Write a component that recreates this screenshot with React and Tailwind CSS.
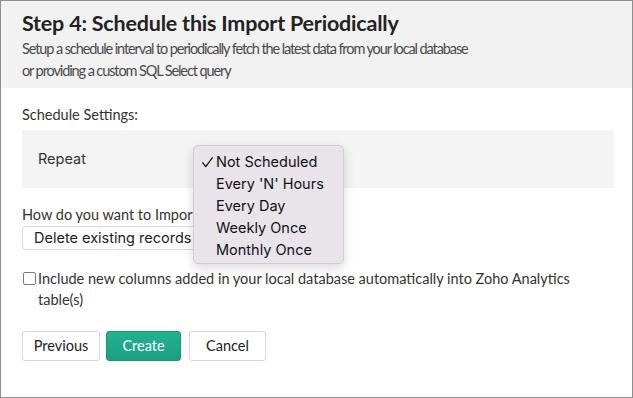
import React from "react";

export default function App() {
  const lato = { fontFamily: "Lato, 'Open Sans', sans-serif" };
  const sys = { fontFamily: "Inter, 'Noto Sans', sans-serif" };
  return (
    <div className="relative w-[633px] h-[398px] border border-[#8e8e8e] bg-white overflow-hidden text-[#222]" style={lato}>
      <div className="bg-[#f2f2f2] h-[87px] pl-[21px] pt-[9px]">
        <h1 className="text-[21.5px] leading-[26px] font-bold text-[#222] tracking-[-0.2px]">Step 4: Schedule this Import Periodically</h1>
        <p className="text-[14.5px] leading-[22px] text-[#4a4a4a] mt-[2px] tracking-[-1.1px]">
          Setup a schedule interval to periodically fetch the latest data from your local database
          <br />
          or providing a custom SQL Select query
        </p>
      </div>
      <div className="pl-[21px] pr-[18px]">
        <div className="text-[14.5px] leading-[20px] text-[#333] mt-[17px]">Schedule Settings:</div>
        <div className="bg-[#f4f4f4] h-[58px] mt-[5px] flex items-center pl-[16px]">
          <span className="text-[14.5px] text-[#333]" style={sys}>Repeat</span>
        </div>
        <div className="text-[14.5px] leading-[20px] text-[#333] mt-[17px]">How do you want to Import</div>
        <div className="w-[200px] h-[24px] mt-[1px] border border-[#d9d9d9] rounded-[4px] flex items-center pl-[11px] bg-white">
          <span className="text-[14.5px] text-[#222]" style={sys}>Delete existing records</span>
        </div>
        <div className="flex items-start mt-[18px]">
          <div className="w-[13px] h-[13px] border border-[#7a7a8a] rounded-[2px] mt-[4px] ml-[1px] mr-[2px] shrink-0 bg-white" />
          <div className="text-[14.5px] leading-[21px] text-[#333]">
            Include new columns added in your local database automatically into Zoho Analytics
            <br />
            table(s)
          </div>
        </div>
        <div className="flex mt-[21px]">
          <button className="w-[78px] h-[30px] border border-[#d6d6d6] rounded-[3px] bg-white text-[14.5px] text-[#222]">Previous</button>
          <button className="w-[75px] h-[30px] ml-[6px] border border-[#17947a] rounded-[3px] bg-[linear-gradient(#21b392,#1b9e80)] text-[14.5px] text-white">Create</button>
          <button className="w-[77px] h-[30px] ml-[8px] border border-[#d6d6d6] rounded-[3px] bg-white text-[14.5px] text-[#222]">Cancel</button>
        </div>
      </div>
      <div
        className="absolute left-[192px] top-[144px] w-[151px] h-[119px] rounded-[5px] bg-[#e8e4ea] border border-[#d0ccd2] shadow-[0_4px_12px_rgba(0,0,0,0.15)] pt-[5px]"
        style={sys}
      >
        {["Not Scheduled", "Every 'N' Hours", "Every Day", "Weekly Once", "Monthly Once"].map((t, i) => (
          <div key={t} className="relative h-[22px] leading-[22px] pl-[22px] text-[14.5px] text-[#111]">
            {i === 0 && (
              <svg className="absolute left-[8px] top-[6px]" width="11" height="11" viewBox="0 0 11 11" fill="none">
                <path d="M0.8 5.8 L3.8 9.6 L10.2 0.8" stroke="#111" strokeWidth="1.3" strokeLinecap="round" strokeLinejoin="round" />
              </svg>
            )}
            {t}
          </div>
        ))}
      </div>
    </div>
  );
}
